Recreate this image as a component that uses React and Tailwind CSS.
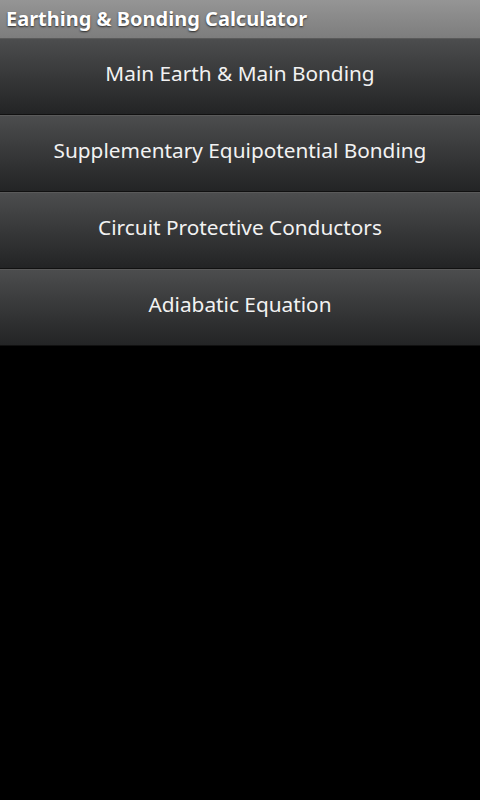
import React from "react";

const items = [
  "Main Earth & Main Bonding",
  "Supplementary Equipotential Bonding",
  "Circuit Protective Conductors",
  "Adiabatic Equation",
];

const App = () => {
  return (
    <div className="w-[480px] h-[800px] bg-black font-['Noto_Sans',sans-serif]">
      {/* Title bar */}
      <div className="h-[38px] flex items-center px-[6px] bg-gradient-to-b from-[#959595] to-[#7d7d7d]">
        <span className="text-[20px] font-bold text-white [text-shadow:0_1px_2px_rgba(0,0,0,0.7)]">
          Earthing &amp; Bonding Calculator
        </span>
      </div>

      {/* Menu buttons */}
      <div className="flex flex-col">
        {items.map((label) => (
          <button
            key={label}
            className="h-[77px] w-full flex items-center justify-center pb-[6px] border-t border-[#5a5a5a] border-b border-b-[#111] bg-gradient-to-b from-[#4c4d4e] to-[#232425] text-[#f2f2f2] text-[20.8px]"
          >
            {label}
          </button>
        ))}
      </div>
    </div>
  );
};

export default App;
